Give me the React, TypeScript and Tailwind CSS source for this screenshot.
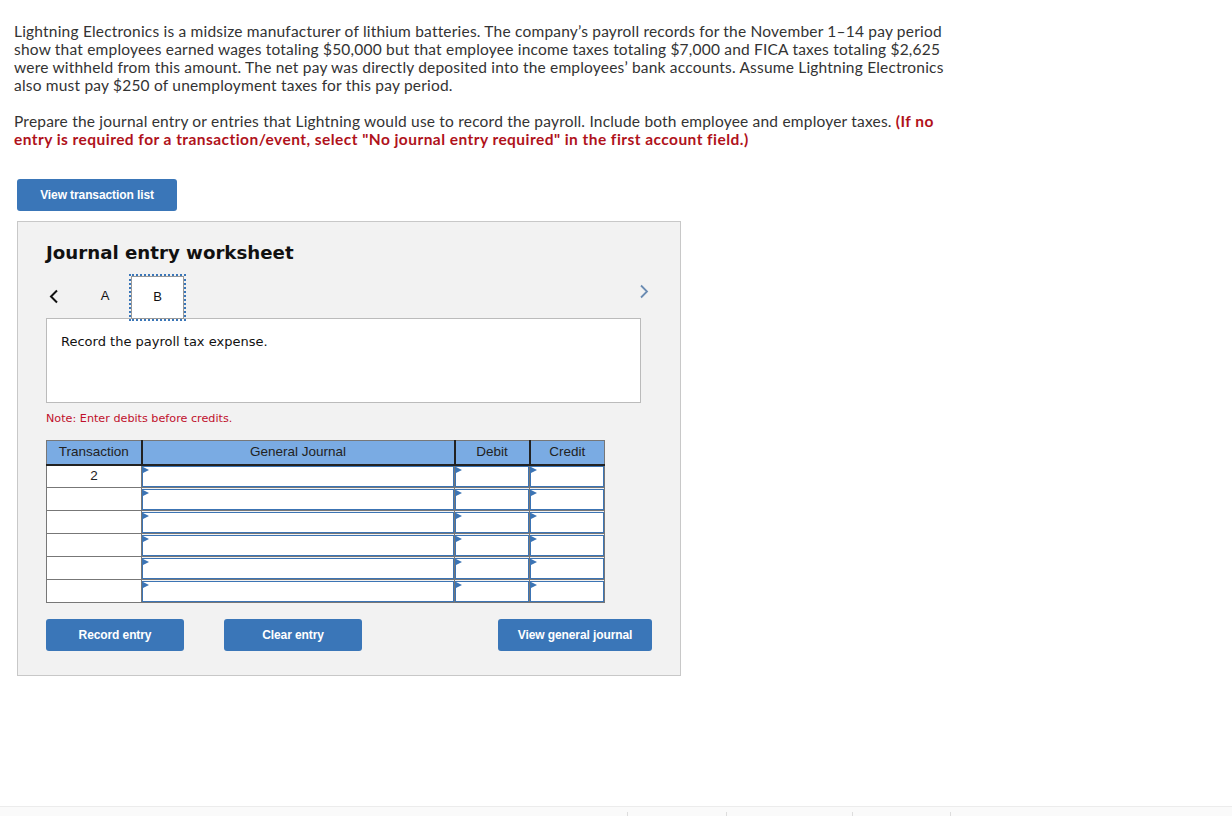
import React from "react";

const body = { fontFamily: "Lato, 'Open Sans', sans-serif" };
const verdana = { fontFamily: "'DejaVu Sans', Verdana, sans-serif" };
const narrow = { fontFamily: "'Liberation Sans Narrow', 'Liberation Sans', Arial, sans-serif" };
const arial = { fontFamily: "'Liberation Sans', Arial, sans-serif" };

function BlueButton({ label, className = "" }: { label: string; className?: string }) {
  return (
    <button
      className={`h-[32px] rounded-[3px] bg-[#3a76b8] text-[12px] font-bold tracking-[-0.1px] text-white ${className}`}
      style={narrow}
    >
      {label}
    </button>
  );
}

function InputCell() {
  return (
    <td className="border border-[#777] p-0 h-[23px]">
      <div className="relative h-[21px] border-[1.5px] border-[#3c74b4] bg-white">
        <span className="absolute left-0 top-0 h-0 w-0 border-y-[3.5px] border-l-[6px] border-y-transparent border-l-[#3c74b4]" />
      </div>
    </td>
  );
}

export default function App() {
  const rows = ["2", "", "", "", "", ""];

  return (
    <div className="relative flex min-h-[816px] flex-col bg-white text-[#333]">
      <div className="px-[14px] pt-[22px] text-[15.5px] leading-[18px] tracking-[0.2px]" style={body}>
        <p className="whitespace-nowrap">
          Lightning Electronics is a midsize manufacturer of lithium batteries. The company’s payroll records for the November 1–14 pay period
          <br />
          show that employees earned wages totaling $50,000 but that employee income taxes totaling $7,000 and FICA taxes totaling $2,625
          <br />
          were withheld from this amount. The net pay was directly deposited into the employees’ bank accounts. Assume Lightning Electronics
          <br />
          also must pay $250 of unemployment taxes for this pay period.
        </p>
        <p className="mt-[18px] whitespace-nowrap">
          Prepare the journal entry or entries that Lightning would use to record the payroll. Include both employee and employer taxes.{" "}
          <strong className="tracking-[0.45px] text-[#b0121b]">(If no</strong>
          <br />
          <strong className="tracking-[0.45px] text-[#b0121b]">
            entry is required for a transaction/event, select "No journal entry required" in the first account field.)
          </strong>
        </p>
      </div>

      <div className="px-[17px]">
        <BlueButton label="View transaction list" className="mt-[31px] w-[160px]" />

        <div className="mt-[10px] w-[664px] border border-[#c8c8c8] bg-[#f2f2f2] pl-[28px] pr-[39px] pb-[24px]">
          <h2 className="pt-[19px] text-[18.2px] font-bold leading-[24px] text-[#111]" style={verdana}>
            Journal entry worksheet
          </h2>

          <div className="relative mt-[11px] flex h-[42px] items-end">
            <div className="flex h-[42px] w-[33px] items-center justify-start pl-[3px] pb-[2px]">
              <svg width="10" height="15" viewBox="0 0 10 15">
                <path d="M8 1.5 L2 7.5 L8 13.5" fill="none" stroke="#111" strokeWidth="2" />
              </svg>
            </div>
            <div className="flex h-[42px] w-[52px] items-center justify-center pb-[2px] text-[13px] text-[#111]" style={arial}>
              A
            </div>
            <div className="relative z-10 -mb-[1px] flex h-[43px] w-[53px] items-center justify-center border border-[#999] bg-white pb-[2px] text-[13px] text-[#111] outline-2 outline-dotted outline-[#3a76b8]" style={arial}>
              B
            </div>
            <div className="absolute right-[-8px] top-[8px]">
              <svg width="10" height="15" viewBox="0 0 10 15">
                <path d="M2 1.5 L8 7.5 L2 13.5" fill="none" stroke="#6b8cb3" strokeWidth="1.8" />
              </svg>
            </div>
          </div>

          <div className="h-[85px] w-[595px] border border-[#bbb] bg-white pl-[14px] pt-[13px] text-[13px] text-[#111]" style={verdana}>
            Record the payroll tax expense.
          </div>

          <p className="mt-[9px] text-[11.2px] leading-[14px] text-[#c0102c]" style={verdana}>
            Note: Enter debits before credits.
          </p>

          <table className="mt-[14px] w-[558px] table-fixed border-collapse border border-[#777]" style={arial}>
            <colgroup>
              <col className="w-[95px]" />
              <col className="w-[313px]" />
              <col className="w-[75px]" />
              <col className="w-[75px]" />
            </colgroup>
            <thead>
              <tr className="h-[24px] bg-[#7aabe3] text-[13.5px] text-[#222]">
                <th className="border-b-2 border-r-2 border-[#222] font-normal">Transaction</th>
                <th className="border-b-2 border-r-2 border-[#222] font-normal">General Journal</th>
                <th className="border-b-2 border-r-2 border-[#222] font-normal">Debit</th>
                <th className="border-b-2 border-[#222] font-normal">Credit</th>
              </tr>
            </thead>
            <tbody>
              {rows.map((r, i) => (
                <tr key={i} className="h-[23px]">
                  <td className="border border-[#777] bg-white text-center text-[13.5px] text-[#222]">{r}</td>
                  <InputCell />
                  <InputCell />
                  <InputCell />
                </tr>
              ))}
            </tbody>
          </table>

          <div className="mt-[16px] flex w-[606px] items-center">
            <BlueButton label="Record entry" className="w-[138px]" />
            <BlueButton label="Clear entry" className="ml-[40px] w-[138px]" />
            <BlueButton label="View general journal" className="ml-auto w-[154px]" />
          </div>
        </div>
      </div>

      <div className="mt-auto flex h-[10px] border-t border-[#ececec] bg-[#fafafa]">
        <div className="ml-[627px] mt-[5px] h-[5px] w-px bg-[#ddd]" />
        <div className="ml-[98px] mt-[5px] h-[5px] w-px bg-[#ddd]" />
        <div className="ml-[125px] mt-[5px] h-[5px] w-px bg-[#ddd]" />
        <div className="ml-[97px] mt-[5px] h-[5px] w-px bg-[#ddd]" />
      </div>
    </div>
  );
}
